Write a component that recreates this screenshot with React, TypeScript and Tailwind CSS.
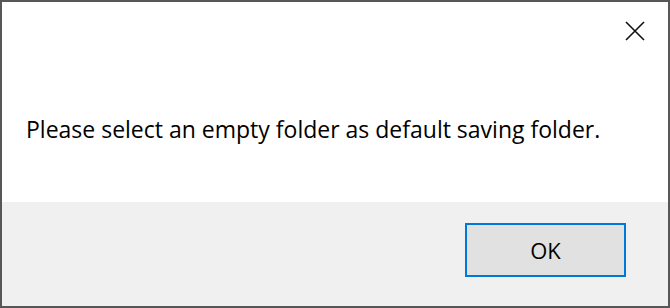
export default function App() {
  return (
    <div className="w-[670px] h-[308px] border-2 border-[#575757] bg-white flex flex-col font-['Open_Sans',sans-serif] text-black">
      <div className="h-[200px] relative">
        <button className="absolute left-[621px] top-[17px] w-[24px] h-[24px] flex items-center justify-center">
          <svg width="22" height="22" viewBox="0 0 22 22" fill="none" stroke="#111" strokeWidth="1.6">
            <path d="M2 2 L20 20 M20 2 L2 20" />
          </svg>
        </button>
        <p className="pt-[111px] pl-[24px] text-[23px] leading-[32px]">
          Please select an empty folder as default saving folder.
        </p>
      </div>
      <div className="flex-1 bg-[#f0f0f0] flex justify-end items-start pt-[21px] pr-[42px]">
        <button className="w-[161px] h-[54px] bg-[#e1e1e1] border-2 border-[#0078d7] text-[22px] flex items-center justify-center">
          OK
        </button>
      </div>
    </div>
  );
}
